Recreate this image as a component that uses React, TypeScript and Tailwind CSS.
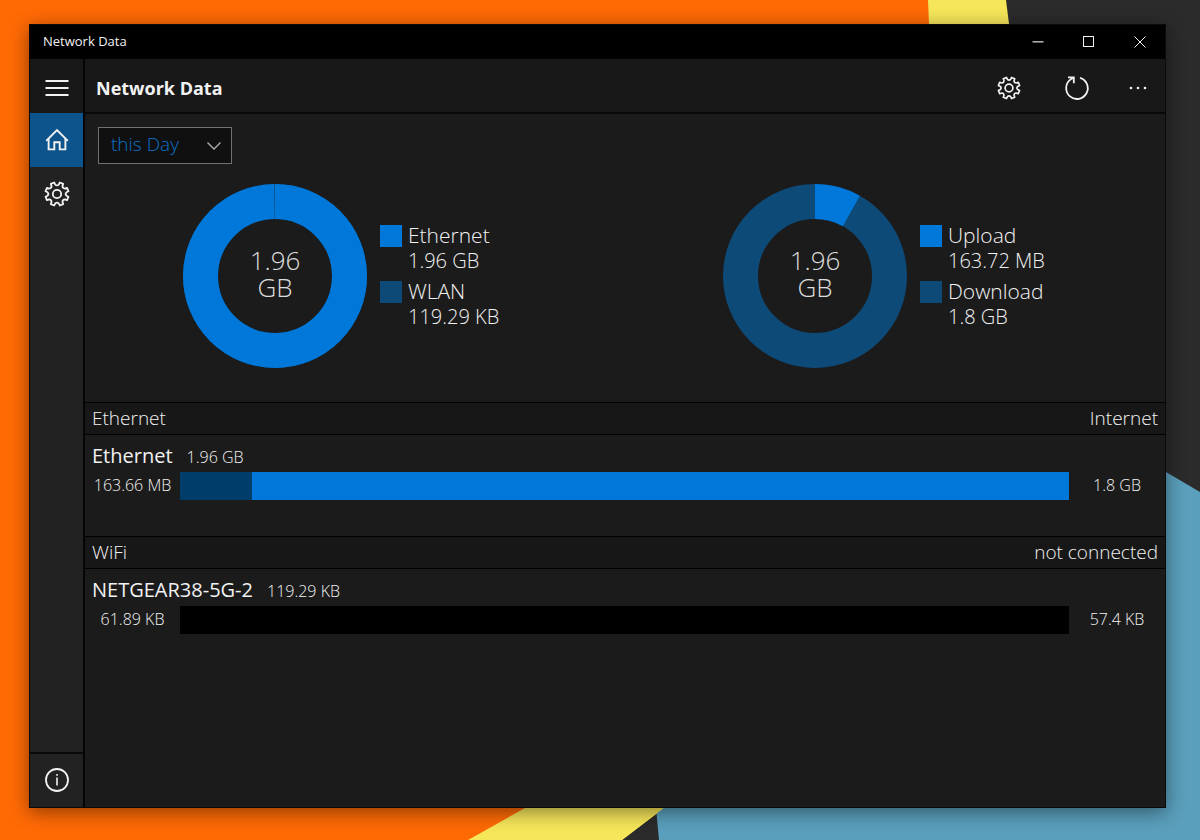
import { useState } from "react";

type Slice = {
  label: string;
  value: string;
  amount: number;
};

type Connection = {
  kind: string;
  status: string;
  name: string;
  total: string;
  upload: string;
  download: string;
  uploadShare: number;
  active: boolean;
};

const ADAPTERS: Slice[] = [
  { label: "Ethernet", value: "1.96 GB", amount: 0.997 },
  { label: "WLAN", value: "119.29 KB", amount: 0.003 },
];

const DIRECTIONS: Slice[] = [
  { label: "Upload", value: "163.72 MB", amount: 0.081 },
  { label: "Download", value: "1.8 GB", amount: 0.919 },
];

const CONNECTIONS: Connection[] = [
  {
    kind: "Ethernet",
    status: "Internet",
    name: "Ethernet",
    total: "1.96 GB",
    upload: "163.66 MB",
    download: "1.8 GB",
    uploadShare: 8.1,
    active: true,
  },
  {
    kind: "WiFi",
    status: "not connected",
    name: "NETGEAR38-5G-2",
    total: "119.29 KB",
    upload: "61.89 KB",
    download: "57.4 KB",
    uploadShare: 52,
    active: false,
  },
];

// Eight wide teeth with narrow notches between them
const buildGearPath = () => {
  const point = (radius: number, degrees: number) => {
    const a = (degrees * Math.PI) / 180;
    return `${(13 + radius * Math.cos(a)).toFixed(2)} ${(13 + radius * Math.sin(a)).toFixed(2)}`;
  };
  let d = "";
  for (let i = 0; i < 8; i++) {
    const c = 22.5 + i * 45;
    d += `${i === 0 ? "M" : "L"}${point(11.8, c - 9)}`;
    d += `L${point(11.8, c + 9)}L${point(9.6, c + 12)}`;
    d += `Q${point(7.8, c + 22.5)} ${point(9.6, c + 33)}`;
  }
  return d + "Z";
};

const GEAR_PATH = buildGearPath();

function GearIcon({ className }: { className: string }) {
  return (
    <svg
      viewBox="0 0 26 26"
      className={className}
      fill="none"
      stroke="currentColor"
      strokeWidth="1.8"
      strokeLinejoin="round"
      aria-hidden="true"
    >
      <path d={GEAR_PATH} />
      <circle cx="13" cy="13" r="4.2" />
    </svg>
  );
}

function HomeIcon() {
  return (
    <svg viewBox="0 0 24 24" className="h-6 w-6" fill="none" stroke="currentColor" strokeWidth="1.9" aria-hidden="true">
      <path d="M1.2 12.8 12 2l10.8 10.8" />
      <path d="M3.6 10.6v10.8h5.7v-7.2h5.4v7.2h5.7V10.6" />
    </svg>
  );
}

function RefreshIcon() {
  return (
    <svg viewBox="0 0 26 26" className="h-6.5 w-6.5" fill="none" stroke="currentColor" strokeWidth="1.8" aria-hidden="true">
      <path d="M16 2.8A10.8 10.8 0 1 1 6.4 4.6l2.9-1.8" />
      <path d="M4 2.4h5.8v5.8" />
    </svg>
  );
}

function Wallpaper() {
  return (
    <svg
      viewBox="0 0 1200 840"
      preserveAspectRatio="none"
      className="absolute inset-0 h-full w-full"
      aria-hidden="true"
    >
      <rect width="1200" height="840" fill="#2b2b2b" />
      <path d="M0 0H1006L1009 24Q1050 520 664 808L622 840H0Z" fill="#f6e65a" />
      <path d="M0 0H928Q960 570 525 808L468 840H0Z" fill="#ff6a05" />
      <path d="M659 840L656 808Q650 430 1000 430Q1090 430 1166 472L1200 492V840Z" fill="#5a9fbc" />
      <path d="M600 790H687L656 814L622 840H600Z" fill="#f6e65a" />
    </svg>
  );
}

function TitleBar() {
  return (
    <div className="flex h-[34px] items-center justify-between bg-black pl-[13px]">
      <span className="text-[13px]">Network Data</span>
      <div className="flex h-full">
        <button type="button" aria-label="Minimize" className="flex w-[51px] items-center justify-center">
          <svg viewBox="0 0 12 12" className="h-3 w-3" stroke="#b8b8b8" strokeWidth="1.5" aria-hidden="true">
            <path d="M0.5 5.8h11" />
          </svg>
        </button>
        <button type="button" aria-label="Maximize" className="flex w-[51px] items-center justify-center">
          <svg viewBox="0 0 12 12" className="h-3 w-3" fill="none" stroke="currentColor" aria-hidden="true">
            <rect x="0.5" y="0.5" width="10" height="10" />
          </svg>
        </button>
        <button type="button" aria-label="Close" className="flex w-[51px] items-center justify-center">
          <svg viewBox="0 0 12 12" className="h-3 w-3" stroke="currentColor" aria-hidden="true">
            <path d="M0.5 0.5l11 11M11.5 0.5l-11 11" />
          </svg>
        </button>
      </div>
    </div>
  );
}

function Sidebar() {
  return (
    <nav className="flex w-[55px] shrink-0 flex-col border-r-2 border-black/80 bg-[#222222] bg-clip-padding">
      <button
        type="button"
        aria-label="Menu"
        className="flex h-[54px] items-center justify-center bg-[#181818] pt-1"
      >
        <svg viewBox="0 0 24 16" className="h-4 w-6" stroke="currentColor" strokeWidth="2" aria-hidden="true">
          <path d="M0.5 1h23M0.5 8h23M0.5 15h23" />
        </svg>
      </button>
      <a href="#home" aria-label="Home" className="flex h-[54px] items-center justify-center bg-[#0d548d]">
        <HomeIcon />
      </a>
      <a href="#settings" aria-label="Settings" className="flex h-[54px] items-center justify-center">
        <GearIcon className="h-6.5 w-6.5" />
      </a>
      <a
        href="#about"
        aria-label="About"
        className="mt-auto flex h-[55px] items-center justify-center border-t-2 border-black/70 pb-0.5"
      >
        <svg viewBox="0 0 24 24" className="h-6 w-6" fill="none" stroke="currentColor" aria-hidden="true">
          <circle cx="12" cy="12" r="11" strokeWidth="1.8" />
          <path d="M12 9.5v8M12 6v1.8" strokeWidth="1.6" />
        </svg>
      </a>
    </nav>
  );
}

function Header() {
  return (
    <header className="flex h-[55px] items-center justify-between border-b-2 border-black/60 bg-[#181818] pt-1 pl-[11px]">
      <h1 className="text-lg font-bold">Network Data</h1>
      <div className="flex">
        <button type="button" aria-label="Settings" className="flex h-12 w-[68px] items-center justify-center">
          <GearIcon className="h-6 w-6" />
        </button>
        <button type="button" aria-label="Refresh" className="flex h-12 w-[68px] items-center justify-center">
          <RefreshIcon />
        </button>
        <button type="button" aria-label="More" className="flex h-12 w-[54px] items-center justify-center">
          <svg viewBox="0 0 18 4" className="h-1 w-[18px]" fill="currentColor" aria-hidden="true">
            <circle cx="2" cy="2" r="1.3" />
            <circle cx="9" cy="2" r="1.3" />
            <circle cx="16" cy="2" r="1.3" />
          </svg>
        </button>
      </div>
    </header>
  );
}

function PeriodSelect() {
  const [period, setPeriod] = useState("day");

  return (
    <div className="relative w-[134px]">
      <select
        aria-label="Period"
        value={period}
        onChange={(e) => setPeriod(e.target.value)}
        className="h-[37px] w-full appearance-none border border-[#707070] bg-[#101010] pb-0.5 pl-3 text-[19px] font-light text-[#0b72ca]"
      >
        <option value="day">this Day</option>
        <option value="week">this Week</option>
        <option value="month">this Month</option>
      </select>
      <svg
        viewBox="0 0 14 8"
        className="pointer-events-none absolute top-[15px] right-[11px] h-2 w-3.5"
        fill="none"
        stroke="#b0b0b0"
        strokeWidth="1.3"
        aria-hidden="true"
      >
        <path d="M0.5 0.5 7 7l6.5-6.5" />
      </svg>
    </div>
  );
}

function Donut({ slices }: { slices: Slice[] }) {
  const circumference = 2 * Math.PI * 74.5;
  const share = slices[0].amount * circumference;

  return (
    <div className="grid shrink-0 place-items-center">
      <svg viewBox="0 0 184 184" className="col-start-1 row-start-1 h-[184px] w-[184px]" fill="none" aria-hidden="true">
        <circle cx="92" cy="92" r="74.5" stroke="#0d4a78" strokeWidth="35" />
        <circle
          cx="92"
          cy="92"
          r="74.5"
          stroke="#0078d9"
          strokeWidth="35"
          strokeDasharray={`${share} ${circumference - share}`}
          transform="rotate(-90 92 92)"
        />
      </svg>
      <p className="col-start-1 row-start-1 pb-1 text-center text-[26px] leading-[27px] font-light text-[#dddddd]">
        1.96
        <br />
        GB
      </p>
    </div>
  );
}

function UsageChart({ slices }: { slices: Slice[] }) {
  return (
    <div className="flex items-center gap-[13px] pl-[98px]">
      <Donut slices={slices} />
      <ul className="flex flex-col gap-1">
        {slices.map((slice, i) => (
          <li key={slice.label} className="flex gap-1.5 leading-[26px] font-light">
            <span className={`mt-[3px] h-[22px] w-[22px] ${i === 0 ? "bg-[#0078d9]" : "bg-[#0d4a78]"}`} />
            <div>
              <p className="text-[21px] leading-[26px]">{slice.label}</p>
              <p className="text-xl leading-[26px]">{slice.value}</p>
            </div>
          </li>
        ))}
      </ul>
    </div>
  );
}

function ConnectionBlock({ connection }: { connection: Connection }) {
  return (
    <section className="h-[134px]">
      <h2 className="flex h-[33px] items-center justify-between border-y border-black bg-[#171717] px-[7px] text-[19px] font-light">
        <span>{connection.kind}</span>
        <span>{connection.status}</span>
      </h2>
      <div className="flex items-baseline gap-3.5 px-[7px] pt-1.5 leading-[30px]">
        <h3 className="text-xl leading-[30px]">{connection.name}</h3>
        <span className="text-base leading-[30px] font-light">{connection.total}</span>
      </div>
      <div className="flex text-center text-base leading-[26px] font-light">
        <span className="w-[95px]">{connection.upload}</span>
        <div className={`flex h-7 flex-1 ${connection.active ? "bg-[#0078d9]" : "bg-black"}`}>
          {connection.active && (
            <div className="bg-[#003d6b]" style={{ width: `${connection.uploadShare}%` }} />
          )}
        </div>
        <span className="w-24">{connection.download}</span>
      </div>
    </section>
  );
}

export default function App() {
  return (
    <div className="relative flex min-h-screen pt-6 pr-[34px] pb-8 pl-[29px] font-['Open_Sans','Noto_Sans',sans-serif] text-[#f2f2f2]">
      <Wallpaper />
      <div className="relative flex flex-1 flex-col border border-[#0a0a0a] bg-[#1b1b1b] shadow-[0_4px_18px_rgba(0,0,0,0.45)]">
        <TitleBar />
        <div className="flex flex-1">
          <Sidebar />
          <div className="min-w-0 flex-1">
            <Header />
            <main>
              <div className="px-[13px] pt-[13px]">
                <PeriodSelect />
              </div>
              <div className="grid grid-cols-2 pt-5 pb-[34px]">
                <UsageChart slices={ADAPTERS} />
                <UsageChart slices={DIRECTIONS} />
              </div>
              {CONNECTIONS.map((connection) => (
                <ConnectionBlock key={connection.kind} connection={connection} />
              ))}
            </main>
          </div>
        </div>
      </div>
    </div>
  );
}
